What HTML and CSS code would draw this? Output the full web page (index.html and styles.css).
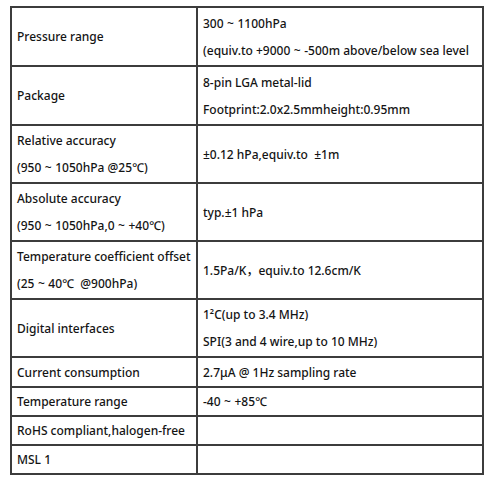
FILE: index.html
```html
<!DOCTYPE html>
<html>
<head>
<meta charset="utf-8">
<link rel="stylesheet" href="styles.css">
</head>
<body>
<div class="spec">
  <div class="cell"><p>Pressure range</p></div>
  <div class="cell"><p>300<span class="t">~</span>1100hPa</p><p>(equiv.to +9000<span class="t">~</span>-500m above/below sea level</p></div>

  <div class="cell"><p>Package</p></div>
  <div class="cell"><p>8-pin LGA metal-lid</p><p>Footprint:2.0x2.5mmheight:0.95mm</p></div>

  <div class="cell"><p>Relative accuracy</p><p>(950<span class="t">~</span>1050hPa @25℃)</p></div>
  <div class="cell"><p>±0.12 hPa,equiv.to &nbsp;±1m</p></div>

  <div class="cell"><p>Absolute accuracy</p><p>(950<span class="t">~</span>1050hPa,0<span class="t">~</span>+40℃)</p></div>
  <div class="cell"><p>typ.±1 hPa</p></div>

  <div class="cell"><p>Temperature coefficient offset</p><p>(25<span class="t">~</span>40℃ &nbsp;@900hPa)</p></div>
  <div class="cell"><p>1.5Pa/K，equiv.to 12.6cm/K</p></div>

  <div class="cell"><p>Digital interfaces</p></div>
  <div class="cell"><p>1²C(up to 3.4 MHz)</p><p>SPI(3 and 4 wire,up to 10 MHz)</p></div>

  <div class="cell"><p>Current consumption</p></div>
  <div class="cell"><p>2.7μA @ 1Hz sampling rate</p></div>

  <div class="cell"><p>Temperature range</p></div>
  <div class="cell"><p>-40<span class="t">~</span>+85℃</p></div>

  <div class="cell"><p>RoHS compliant,halogen-free</p></div>
  <div class="cell"></div>

  <div class="cell"><p>MSL 1</p></div>
  <div class="cell"></div>
</div>
</body>
</html>
```

FILE: styles.css
```css
html, body {
  margin: 0;
  padding: 0;
  background: #ffffff;
}

body {
  padding: 6px 0 0 10px;
  font-family: "Noto Sans", "Noto Sans CJK SC", sans-serif;
  font-size: 12px;
  font-weight: 500;
  color: #141414;
}

.spec {
  width: 474px;
  box-sizing: border-box;
  display: grid;
  grid-template-columns: 184px 1fr;
  grid-template-rows: 57px 57px 56px 56px 56px 56px 28px 27px 27px 27px;
  gap: 2px;
  padding: 2px;
  background: #3c3c3c;
}

.cell {
  background: #ffffff;
  padding: 0 5px;
  display: flex;
  flex-direction: column;
  justify-content: center;
  line-height: 27px;
  white-space: nowrap;
}

.cell p {
  margin: 0;
}

.t {
  margin: 0 3.5px;
}
```
